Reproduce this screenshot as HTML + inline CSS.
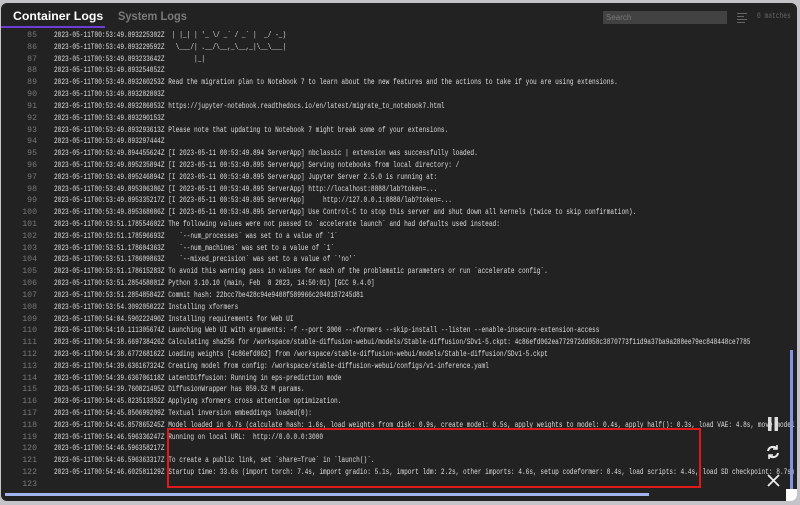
<!DOCTYPE html>
<html><head><meta charset="utf-8"><style>
html,body{margin:0;padding:0;width:800px;height:505px;overflow:hidden;background:#c4c4c8;}
#p{position:absolute;left:1px;top:3px;width:796px;height:498px;background:#222222;border-radius:6px;overflow:hidden;}
.tab{position:absolute;top:6px;font-family:"Liberation Sans",sans-serif;font-weight:bold;font-size:12.3px;}
#ul{position:absolute;left:0;top:23px;width:104px;height:2px;background:#6b3fd6;}
#search{position:absolute;left:602px;top:8px;width:124px;height:13px;background:#424242;color:#777;font:8px "Liberation Sans",sans-serif;line-height:13px;text-indent:3px;}
#m{position:absolute;left:756px;top:9px;color:#666;font:8px "Liberation Mono",monospace;white-space:nowrap;transform:scaleX(0.78);transform-origin:0 0;}
#logs{position:absolute;left:0;top:28px;}
.l{position:relative;height:11.82px;line-height:11.82px;white-space:pre;font:8.2px "Liberation Mono",monospace;color:#ddd;}
.n{position:absolute;left:0;width:36px;text-align:right;color:#777;}
.t{position:absolute;left:53px;transform:scaleX(0.75);transform-origin:0 50%;white-space:pre;}
#box{position:absolute;left:166px;top:425px;width:530px;height:56px;border:2.5px solid #e01a1a;}
#vs{position:absolute;left:789px;top:347px;width:3px;height:142px;background:#8494e4;}
#hs{position:absolute;left:4px;top:490px;width:644px;height:3px;background:#a3b3f0;}
#sq{position:absolute;left:785px;top:486px;width:12px;height:12px;background:#fff;}
</style></head><body>
<div id="p">
<div class="tab" style="left:12px;color:#fff">Container Logs</div>
<div class="tab" style="left:117px;color:#7a7a7a;transform:scaleX(0.9);transform-origin:0 0">System Logs</div>
<div id="ul"></div>
<div id="search">Search</div>
<svg style="position:absolute;left:735px;top:9px" width="12" height="12"><g stroke="#666" stroke-width="1"><line x1="1" y1="1.5" x2="11" y2="1.5"/><line x1="1" y1="4.5" x2="8" y2="4.5"/><line x1="1" y1="7.5" x2="11" y2="7.5"/><line x1="1" y1="10.5" x2="9" y2="10.5"/></g></svg>
<div id="m">0 matches</div>
<div id="logs">
<div class="l"><span class="n">85</span><span class="t">2023-05-11T00:53:49.893225302Z  | |_| | '_ \/ _` / _` |  _/ -_)</span></div>
<div class="l"><span class="n">86</span><span class="t">2023-05-11T00:53:49.893229592Z   \___/| .__/\__,_\__,_|\__\___|</span></div>
<div class="l"><span class="n">87</span><span class="t">2023-05-11T00:53:49.893233642Z        |_|</span></div>
<div class="l"><span class="n">88</span><span class="t">2023-05-11T00:53:49.893254052Z</span></div>
<div class="l"><span class="n">89</span><span class="t">2023-05-11T00:53:49.893260253Z Read the migration plan to Notebook 7 to learn about the new features and the actions to take if you are using extensions.</span></div>
<div class="l"><span class="n">90</span><span class="t">2023-05-11T00:53:49.893282003Z</span></div>
<div class="l"><span class="n">91</span><span class="t">2023-05-11T00:53:49.893286053Z https://jupyter-notebook.readthedocs.io/en/latest/migrate_to_notebook7.html</span></div>
<div class="l"><span class="n">92</span><span class="t">2023-05-11T00:53:49.893290153Z</span></div>
<div class="l"><span class="n">93</span><span class="t">2023-05-11T00:53:49.893293613Z Please note that updating to Notebook 7 might break some of your extensions.</span></div>
<div class="l"><span class="n">94</span><span class="t">2023-05-11T00:53:49.893297444Z</span></div>
<div class="l"><span class="n">95</span><span class="t">2023-05-11T00:53:49.894455624Z [I 2023-05-11 00:53:49.894 ServerApp] nbclassic | extension was successfully loaded.</span></div>
<div class="l"><span class="n">96</span><span class="t">2023-05-11T00:53:49.895235894Z [I 2023-05-11 00:53:49.895 ServerApp] Serving notebooks from local directory: /</span></div>
<div class="l"><span class="n">97</span><span class="t">2023-05-11T00:53:49.895246894Z [I 2023-05-11 00:53:49.895 ServerApp] Jupyter Server 2.5.0 is running at:</span></div>
<div class="l"><span class="n">98</span><span class="t">2023-05-11T00:53:49.895306386Z [I 2023-05-11 00:53:49.895 ServerApp] http://localhost:8888/lab?token=...</span></div>
<div class="l"><span class="n">99</span><span class="t">2023-05-11T00:53:49.895335217Z [I 2023-05-11 00:53:49.895 ServerApp]     http://127.0.0.1:8888/lab?token=...</span></div>
<div class="l"><span class="n">100</span><span class="t">2023-05-11T00:53:49.895368086Z [I 2023-05-11 00:53:49.895 ServerApp] Use Control-C to stop this server and shut down all kernels (twice to skip confirmation).</span></div>
<div class="l"><span class="n">101</span><span class="t">2023-05-11T00:53:51.178554602Z The following values were not passed to `accelerate launch` and had defaults used instead:</span></div>
<div class="l"><span class="n">102</span><span class="t">2023-05-11T00:53:51.178596693Z    `--num_processes` was set to a value of `1`</span></div>
<div class="l"><span class="n">103</span><span class="t">2023-05-11T00:53:51.178604363Z    `--num_machines` was set to a value of `1`</span></div>
<div class="l"><span class="n">104</span><span class="t">2023-05-11T00:53:51.178609863Z    `--mixed_precision` was set to a value of `'no'`</span></div>
<div class="l"><span class="n">105</span><span class="t">2023-05-11T00:53:51.178615283Z To avoid this warning pass in values for each of the problematic parameters or run `accelerate config`.</span></div>
<div class="l"><span class="n">106</span><span class="t">2023-05-11T00:53:51.285458001Z Python 3.10.10 (main, Feb  8 2023, 14:50:01) [GCC 9.4.0]</span></div>
<div class="l"><span class="n">107</span><span class="t">2023-05-11T00:53:51.285485842Z Commit hash: 22bcc7be428c94e9408f589966c2040187245d81</span></div>
<div class="l"><span class="n">108</span><span class="t">2023-05-11T00:53:54.309205022Z Installing xformers</span></div>
<div class="l"><span class="n">109</span><span class="t">2023-05-11T00:54:04.590222490Z Installing requirements for Web UI</span></div>
<div class="l"><span class="n">110</span><span class="t">2023-05-11T00:54:10.111305674Z Launching Web UI with arguments: -f --port 3000 --xformers --skip-install --listen --enable-insecure-extension-access</span></div>
<div class="l"><span class="n">111</span><span class="t">2023-05-11T00:54:38.669738426Z Calculating sha256 for /workspace/stable-diffusion-webui/models/Stable-diffusion/SDv1-5.ckpt: 4c86efd062ea772972dd058c3870773f11d9a37ba9a288ee79ec848448ce7785</span></div>
<div class="l"><span class="n">112</span><span class="t">2023-05-11T00:54:38.677268162Z Loading weights [4c86efd062] from /workspace/stable-diffusion-webui/models/Stable-diffusion/SDv1-5.ckpt</span></div>
<div class="l"><span class="n">113</span><span class="t">2023-05-11T00:54:39.636167324Z Creating model from config: /workspace/stable-diffusion-webui/configs/v1-inference.yaml</span></div>
<div class="l"><span class="n">114</span><span class="t">2023-05-11T00:54:39.636706118Z LatentDiffusion: Running in eps-prediction mode</span></div>
<div class="l"><span class="n">115</span><span class="t">2023-05-11T00:54:39.760821495Z DiffusionWrapper has 859.52 M params.</span></div>
<div class="l"><span class="n">116</span><span class="t">2023-05-11T00:54:45.823513352Z Applying xformers cross attention optimization.</span></div>
<div class="l"><span class="n">117</span><span class="t">2023-05-11T00:54:45.850699209Z Textual inversion embeddings loaded(0):</span></div>
<div class="l"><span class="n">118</span><span class="t">2023-05-11T00:54:45.857865245Z Model loaded in 8.7s (calculate hash: 1.6s, load weights from disk: 0.9s, create model: 0.5s, apply weights to model: 0.4s, apply half(): 0.3s, load VAE: 4.8s, move model</span></div>
<div class="l"><span class="n">119</span><span class="t">2023-05-11T00:54:46.596336247Z Running on local URL:  http://0.0.0.0:3000</span></div>
<div class="l"><span class="n">120</span><span class="t">2023-05-11T00:54:46.596358217Z</span></div>
<div class="l"><span class="n">121</span><span class="t">2023-05-11T00:54:46.596363317Z To create a public link, set `share=True` in `launch()`.</span></div>
<div class="l"><span class="n">122</span><span class="t">2023-05-11T00:54:46.602581129Z Startup time: 33.6s (import torch: 7.4s, import gradio: 5.1s, import ldm: 2.2s, other imports: 4.6s, setup codeformer: 0.4s, load scripts: 4.4s, load SD checkpoint: 8.7s)</span></div>
<div class="l"><span class="n">123</span><span class="t"></span></div>
</div>
<div id="box"></div>
<svg style="position:absolute;left:765px;top:413px" width="14" height="16"><rect x="2" y="1" width="3.5" height="14" fill="#ddd"/><rect x="8.5" y="1" width="3.5" height="14" fill="#ddd"/></svg>
<svg style="position:absolute;left:764px;top:441px" width="16" height="16" fill="none" stroke="#eee" stroke-width="2"><path d="M3 7a5 5 0 0 1 9-2"/><path d="M13 9a5 5 0 0 1-9 2"/><path d="M12 1v4h-4" stroke-width="1.6"/><path d="M4 15v-4h4" stroke-width="1.6"/></svg>
<svg style="position:absolute;left:766px;top:471px" width="13" height="13" stroke="#eee" stroke-width="1.8"><line x1="1" y1="1" x2="12" y2="12"/><line x1="12" y1="1" x2="1" y2="12"/></svg>
<div id="vs"></div>
<div id="hs"></div>
<div id="sq"></div>
</div>
</body></html>
